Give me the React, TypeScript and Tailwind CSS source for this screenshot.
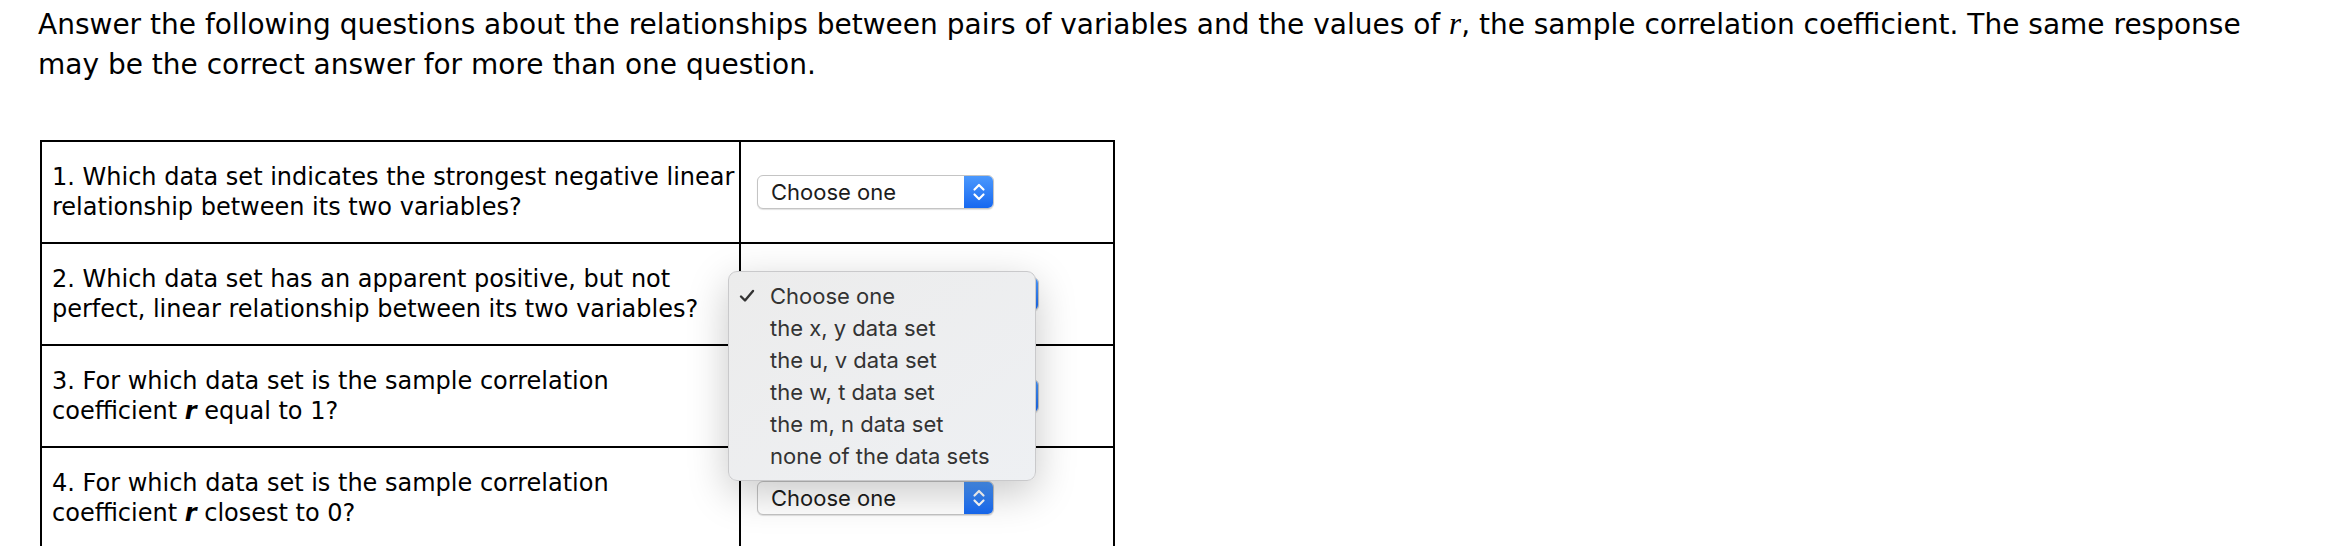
import { Fragment } from "react";

const Chevrons = () => (
  <svg width="14" height="22" viewBox="0 0 14 22" fill="none" stroke="white" strokeWidth="2.2" strokeLinecap="round" strokeLinejoin="round">
    <path d="M2.5 8.5 L7 4 L11.5 8.5" />
    <path d="M2.5 13.5 L7 18 L11.5 13.5" />
  </svg>
);

const FakeSelect = ({ wide }: { wide?: boolean }) => (
  <div
    className={
      wide
        ? "flex h-[34px] w-[282px] items-stretch overflow-hidden rounded-[6px] border border-[#c4c4c4] bg-white shadow-[0_1px_1px_rgba(0,0,0,0.12)]"
        : "flex h-[34px] w-[237px] items-stretch overflow-hidden rounded-[6px] border border-[#c4c4c4] bg-white shadow-[0_1px_1px_rgba(0,0,0,0.12)]"
    }
  >
    <span className="flex flex-1 items-center pl-[13px] text-[22px] text-[#1c1c1c] [font-family:Inter,Roboto,sans-serif]">
      Choose one
    </span>
    <span className="flex w-[29px] items-center justify-center bg-gradient-to-b from-[#4b98fd] to-[#1668f0]">
      <Chevrons />
    </span>
  </div>
);

const options = [
  "Choose one",
  "the x, y data set",
  "the u, v data set",
  "the w, t data set",
  "the m, n data set",
  "none of the data sets",
];

const R = () => <b className="italic">r</b>;

const rows = [
  {
    q: (
      <Fragment>
        1. Which data set indicates the strongest negative linear
        <br />
        relationship between its two variables?
      </Fragment>
    ),
    wide: false,
  },
  {
    q: (
      <Fragment>
        2. Which data set has an apparent positive, but not
        <br />
        perfect, linear relationship between its two variables?
      </Fragment>
    ),
    wide: true,
  },
  {
    q: (
      <Fragment>
        3. For which data set is the sample correlation
        <br />
        coefficient <R /> equal to 1?
      </Fragment>
    ),
    wide: true,
  },
  {
    q: (
      <Fragment>
        4. For which data set is the sample correlation
        <br />
        coefficient <R /> closest to 0?
      </Fragment>
    ),
    wide: false,
  },
];

export default function App() {
  return (
    <div className="relative h-[546px] w-[2350px] overflow-hidden bg-white pl-[38px] pt-[4px] text-black [font-family:'DejaVu_Sans',Verdana,sans-serif]">
      <p className="whitespace-nowrap text-[28px] leading-[40px]">
        Answer the following questions about the relationships between pairs of variables and the values of{" "}
        <i className="[font-family:'Liberation_Serif',serif] text-[31px]">r</i>, the sample correlation coefficient. The same response
        <br />
        may be the correct answer for more than one question.
      </p>

      <table className="mt-[55px] ml-[2px] w-[1075px] table-fixed border-collapse">
        <colgroup>
          <col className="w-[699px]" />
          <col />
        </colgroup>
        <tbody>
          {rows.map((row, i) => (
            <tr key={i} className="h-[102px]">
              <td className="whitespace-nowrap overflow-visible border-2 border-black pl-[10px] align-middle text-[24px] leading-[30px]">
                {row.q}
              </td>
              <td className="border-2 border-black pl-[16px] align-middle">
                <FakeSelect wide={row.wide} />
              </td>
            </tr>
          ))}
        </tbody>
      </table>

      {/* open popup of select 2 */}
      <div className="absolute left-[728px] top-[271px] w-[308px] rounded-[9px] border border-[#c9c9cb] bg-gradient-to-br from-[#ececec] to-[#eef0f3] py-[8px] shadow-[0_12px_40px_rgba(0,0,0,0.22)] [font-family:Inter,Roboto,sans-serif]">
        {options.map((o, i) => (
          <div key={o} className="relative flex h-[32px] items-center pl-[41px] text-[22px] text-[#333]">
            {i === 0 && (
              <svg className="absolute left-[10px]" width="16" height="14" viewBox="0 0 16 14" fill="none" stroke="#333" strokeWidth="2.4" strokeLinecap="round" strokeLinejoin="round">
                <path d="M2 7.5 L6 11.5 L14 2" />
              </svg>
            )}
            {o}
          </div>
        ))}
      </div>
    </div>
  );
}
